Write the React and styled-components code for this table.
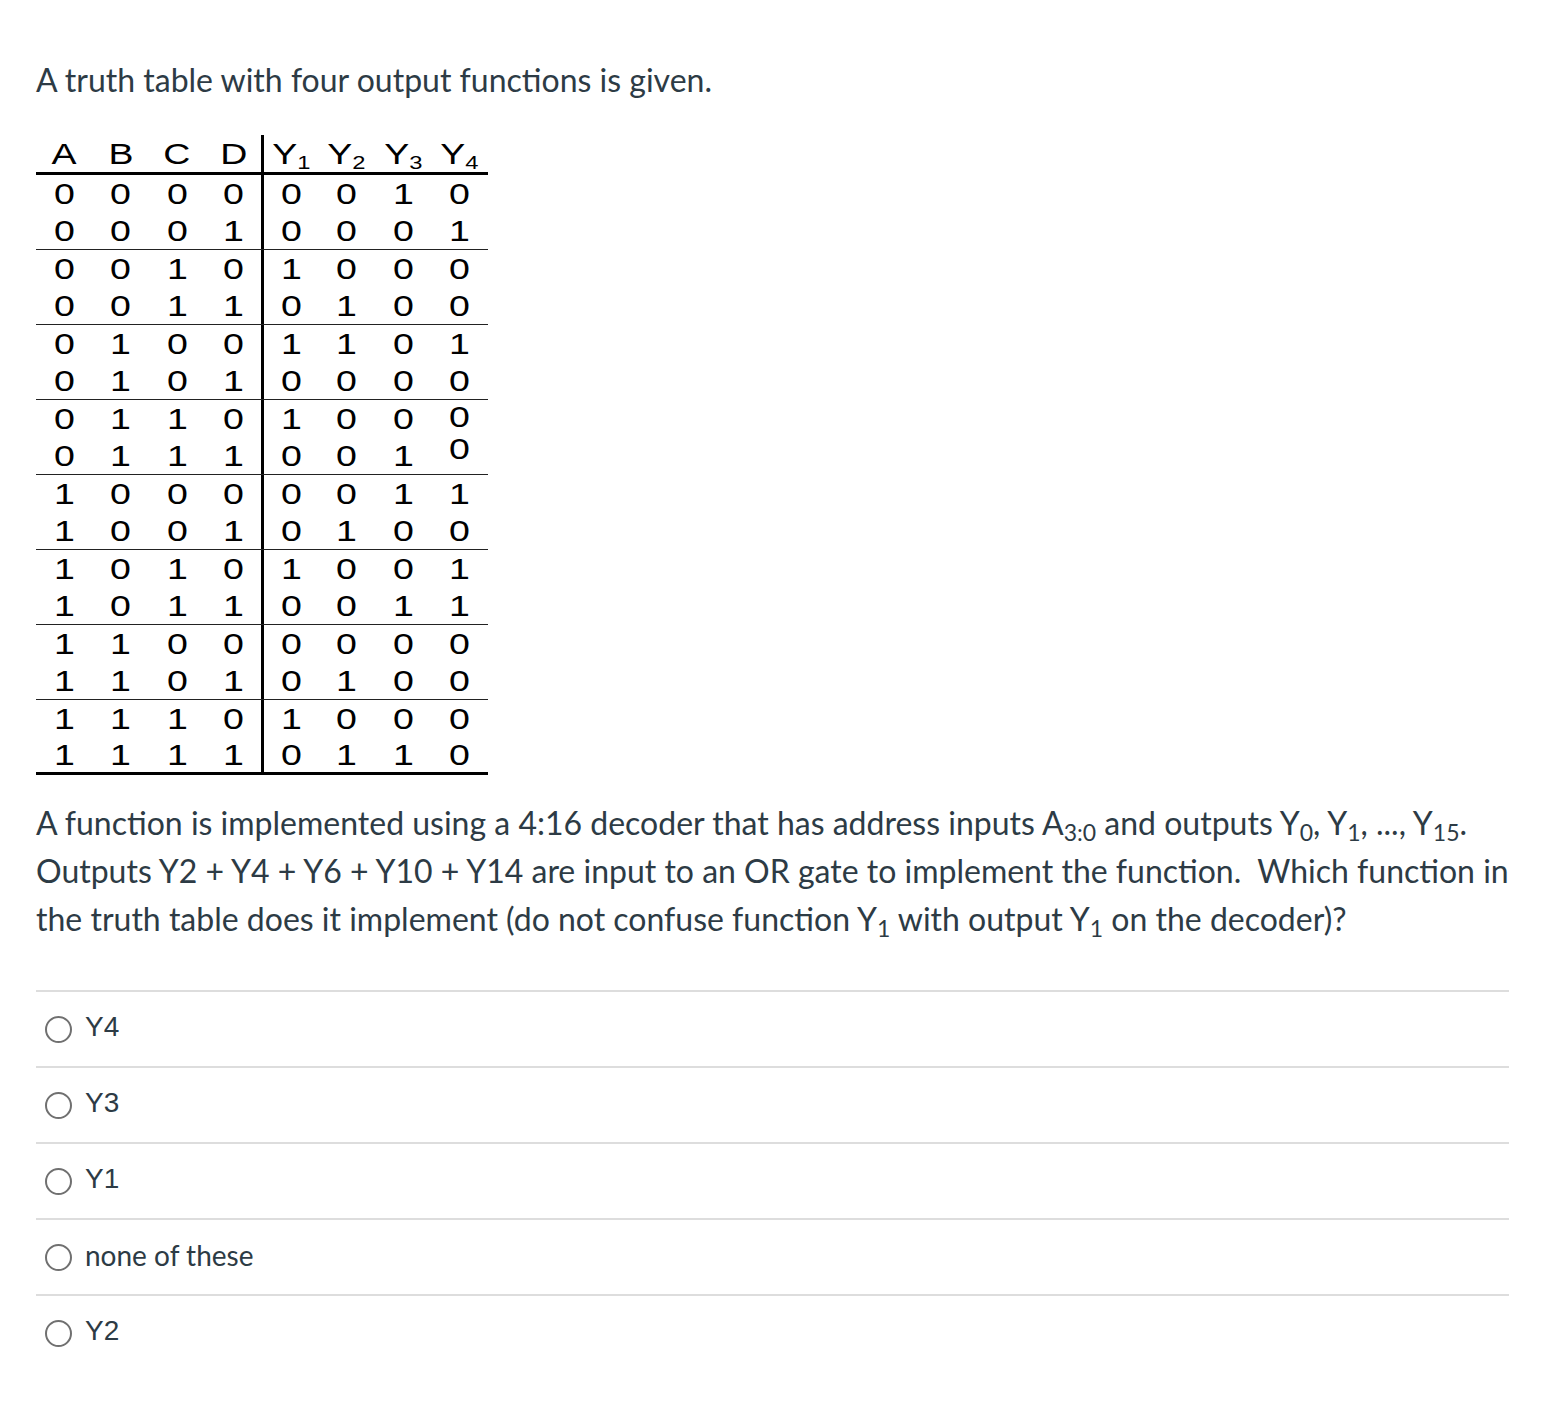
import React from "react"
import styled, { createGlobalStyle } from "styled-components"

const Global = createGlobalStyle`
body{
  margin: 0;
  background: #fff;
  font-family: Lato, "Open Sans", sans-serif;
  color: #2d3b45;
}
`

const arial = `"Liberation Sans", Arial, Helvetica, sans-serif`

const Page = styled.div`
width: 1473px;
padding: 56px 0 40px 36px;
`

const Text = styled.p`
margin: 0;
font-size: 32px;
line-height: 48px;
white-space: nowrap;
sub{
  font-size: 23px;
  line-height: 0;
  vertical-align: -6px;
}
`

const Table = styled.div`
width: 452px;
margin: 31px 0 24px;
color: #000;
`

const Row = styled.div`
display: grid;
grid-template-columns: repeat(8, 56.5px);
box-sizing: border-box;
height: ${p => p.$head ? "40px" : "37.5px"};
border-bottom: ${p => p.$line}px solid ${p => p.$line > 2 ? "#000" : "#222"};
`

const Cell = styled.div`
display: flex;
align-items: center;
justify-content: center;
font-family: ${arial};
font-size: 30px;
border-left: ${p => p.$split ? "3px solid #000" : "none"};
margin-left: ${p => p.$split ? "-1.5px" : "0"};
span{
  display: inline-block;
  transform: scaleX(1.25) translateY(${p => p.$shift || 0}px);
  line-height: 1;
}
sub{
  font-size: 19px;
  vertical-align: -5px;
  line-height: 0;
}
`

const Options = styled.div`
display: flex;
flex-direction: column;
`

const Option = styled.label`
display: flex;
align-items: center;
gap: 13px;
height: 76px;
box-sizing: border-box;
border-top: 2px solid #ddd;
padding: 0 0 4px 9px;
font-size: 28px;
font-family: ${p => p.$arial ? arial : "Lato, sans-serif"};
`

const Radio = styled.span`
width: 23px;
height: 23px;
margin-top: 4px;
border-radius: 50%;
border: 2px solid #707070;
background: #fff;
flex-shrink: 0;
`

const Divider = styled.div`
height: 47px;
`

const rows = [
  "00000010", "00010001", "00101000", "00110100",
  "01001101", "01010000", "01101000", "01110010",
  "10000011", "10010100", "10101001", "10110011",
  "11000000", "11010100", "11101000", "11110110",
]

// two misprinted zeros in the Y4 column sit a little high
const shifts = { "6-7": -2, "7-7": -7 }

const heads = [
  "A", "B", "C", "D",
  <>Y<sub>1</sub></>, <>Y<sub>2</sub></>, <>Y<sub>3</sub></>, <>Y<sub>4</sub></>,
]

const options = [
  { label: "Y4", arial: true },
  { label: "Y3", arial: true },
  { label: "Y1", arial: true },
  { label: "none of these" },
  { label: "Y2", arial: true },
]

export default function App() {
  return (
    <Page>
      <Global />
      <Text>A truth table with four output functions is given.</Text>

      <Table>
        <Row $head $line={3}>
          {heads.map((h, i) => (
            <Cell key={i} $split={i === 4}><span>{h}</span></Cell>
          ))}
        </Row>
        {rows.map((r, ri) => (
          <Row key={ri} $line={ri === 15 ? 3 : ri % 2 ? 1.5 : 0}>
            {r.split("").map((d, ci) => (
              <Cell key={ci} $split={ci === 4} $shift={shifts[ri + "-" + ci]}>
                <span>{d}</span>
              </Cell>
            ))}
          </Row>
        ))}
      </Table>

      <Text>
        A function is implemented using a 4:16 decoder that has address inputs A<sub>3:0</sub> and outputs Y<sub>0</sub>, Y<sub>1</sub>, ..., Y<sub>15</sub>.<br />
        Outputs Y2 + Y4 + Y6 + Y10 + Y14 are input to an OR gate to implement the function.&nbsp; Which function in<br />
        the truth table does it implement (do not confuse function Y<sub>1</sub> with output Y<sub>1</sub> on the decoder)?
      </Text>

      <Divider />

      <Options>
        {options.map(o => (
          <Option key={o.label} $arial={o.arial}>
            <Radio />
            {o.label}
          </Option>
        ))}
      </Options>
    </Page>
  )
}
